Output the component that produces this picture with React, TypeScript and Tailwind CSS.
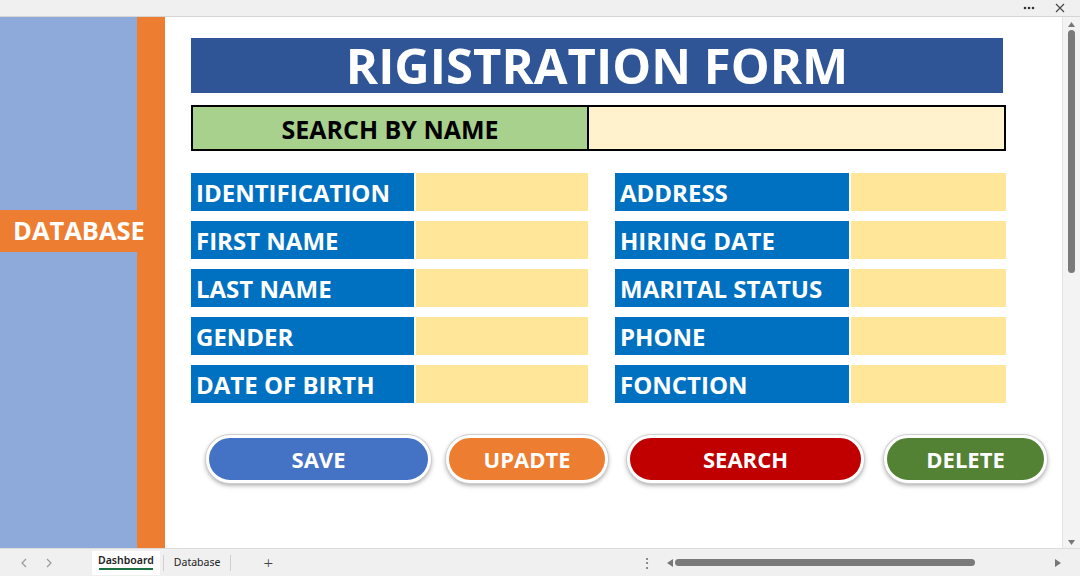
import React from "react";

const font = { fontFamily: '"Open Sans", "Noto Sans", sans-serif' };

const leftFields = ["IDENTIFICATION", "FIRST NAME", "LAST NAME", "GENDER", "DATE OF BIRTH"];
const rightFields = ["ADDRESS", "HIRING DATE", "MARITAL STATUS", "PHONE", "FONCTION"];

function FieldRow({ label, labelW, inputW }: { label: string; labelW: string; inputW: string }) {
  return (
    <div className="flex h-[38px]">
      <div className={`${labelW} bg-[#0070c0] flex items-center pl-[5px] pt-[2px] text-white font-bold text-[24px] leading-none`}>
        {label}
      </div>
      <div className={`${inputW} ml-[2px] bg-[#ffe699]`} />
    </div>
  );
}

function PillButton({ label, w, bg }: { label: string; w: string; bg: string }) {
  return (
    <button
      className={`${w} h-[48px] rounded-full border-[3px] border-white ${bg} text-white font-bold text-[22px] leading-none flex items-center justify-center shadow-[0_0_0_1px_#cfcfcf,0_2px_5px_rgba(0,0,0,0.4)]`}
    >
      {label}
    </button>
  );
}

export default function App() {
  return (
    <div className="w-[1080px] h-[576px] flex flex-col bg-white overflow-hidden" style={font}>
      {/* window title strip */}
      <div className="h-[17px] bg-[#f0f0f0] border-b border-[#d4d4d4] flex items-center justify-end pr-[15px] gap-[20px]">
        <svg width="12" height="4" viewBox="0 0 12 4">
          <circle cx="2" cy="2" r="1.3" fill="#333" />
          <circle cx="6" cy="2" r="1.3" fill="#333" />
          <circle cx="10" cy="2" r="1.3" fill="#333" />
        </svg>
        <svg width="10" height="10" viewBox="0 0 10 10">
          <path d="M1 1 L9 9 M9 1 L1 9" stroke="#444" strokeWidth="1.1" />
        </svg>
      </div>

      {/* sheet area */}
      <div className="flex-1 flex min-h-0">
        {/* side panel */}
        <div className="w-[137px] flex flex-col bg-[#8eaadb]">
          <div className="h-[193px]" />
          <div className="h-[42px] bg-[#ed7d31] flex items-center pl-[13px] text-white font-bold text-[25.5px] leading-none w-[152px] relative z-10">
            DATABASE
          </div>
        </div>
        <div className="w-[28px] bg-[#ed7d31]" />

        {/* form sheet */}
        <div className="flex-1 pl-[26px] pt-[21px]">
          <div className="w-[812px] h-[55px] bg-[#2f5597] flex items-center justify-center text-white font-bold text-[49px] leading-none">
            RIGISTRATION FORM
          </div>

          <div className="mt-[12px] w-[815px] h-[46px] border-2 border-black flex">
            <div className="w-[394px] bg-[#a9d18e] flex items-center justify-center pt-[2px] text-black font-bold text-[25px] leading-none">
              SEARCH BY NAME
            </div>
            <div className="flex-1 border-l-2 border-black bg-[#fff2cc]" />
          </div>

          <div className="mt-[22px] flex gap-[27px]">
            <div className="flex flex-col gap-[10px]">
              {leftFields.map((f) => (
                <FieldRow key={f} label={f} labelW="w-[223px]" inputW="w-[172px]" />
              ))}
            </div>
            <div className="flex flex-col gap-[10px]">
              {rightFields.map((f) => (
                <FieldRow key={f} label={f} labelW="w-[234px]" inputW="w-[155px]" />
              ))}
            </div>
          </div>

          <div className="mt-[32px] flex items-center pl-[15px]">
            <PillButton label="SAVE" w="w-[225px]" bg="bg-[#4472c4]" />
            <div className="w-[15px]" />
            <PillButton label="UPADTE" w="w-[162px]" bg="bg-[#ed7d31]" />
            <div className="w-[19px]" />
            <PillButton label="SEARCH" w="w-[237px]" bg="bg-[#c00000]" />
            <div className="w-[20px]" />
            <PillButton label="DELETE" w="w-[163px]" bg="bg-[#548235]" />
          </div>
        </div>

        {/* vertical scrollbar */}
        <div className="w-[18px] bg-[#f3f3f3] border-l border-[#e4e4e4] flex flex-col items-center pt-[5px] pb-[3px]">
          <svg width="7" height="5" viewBox="0 0 7 5">
            <path d="M3.5 0 L7 5 L0 5 Z" fill="#777" />
          </svg>
          <div className="mt-[3px] w-[7px] h-[243px] rounded-full bg-[#7a7a7a]" />
          <div className="flex-1" />
          <svg width="7" height="5" viewBox="0 0 7 5">
            <path d="M0 0 L7 0 L3.5 5 Z" fill="#777" />
          </svg>
        </div>
      </div>

      {/* sheet tabs strip */}
      <div
        className="h-[28px] bg-[#f0f0f0] border-t border-[#dcdcdc] flex items-center text-[10.5px] text-[#222]"
        style={{ fontFamily: '"Noto Sans", "Open Sans", sans-serif' }}
      >
        <div className="w-[92px] flex items-center pl-[20px] gap-[17px]">
          <svg width="8" height="10" viewBox="0 0 8 10">
            <path d="M6 1 L2 5 L6 9" fill="none" stroke="#9a9a9a" strokeWidth="1.2" />
          </svg>
          <svg width="8" height="10" viewBox="0 0 8 10">
            <path d="M2 1 L6 5 L2 9" fill="none" stroke="#9a9a9a" strokeWidth="1.2" />
          </svg>
        </div>
        <div className="h-[24px] px-[6px] bg-white flex flex-col items-center justify-center font-semibold">
          <span className="leading-none">Dashboard</span>
          <div className="mt-[3px] w-[54px] h-[2px] bg-[#1e7145]" />
        </div>
        <div className="w-px h-[16px] bg-[#cfcfcf] ml-[3px]" />
        <div className="px-[10px] leading-none">Database</div>
        <div className="w-px h-[16px] bg-[#cfcfcf]" />
        <div className="ml-[32px] text-[17px] leading-none text-[#444] font-light">+</div>
        <div className="flex-1" />
        <div className="text-[#555] text-[12px] leading-none mr-[14px]">⋮</div>
        <svg width="6" height="8" viewBox="0 0 6 8" className="mr-[2px]">
          <path d="M6 0 L6 8 L0 4 Z" fill="#777" />
        </svg>
        <div className="w-[300px] h-[7px] rounded-full bg-[#7a7a7a]" />
        <div className="w-[80px]" />
        <svg width="6" height="8" viewBox="0 0 6 8" className="mr-[19px]">
          <path d="M0 0 L6 4 L0 8 Z" fill="#777" />
        </svg>
      </div>
    </div>
  );
}
